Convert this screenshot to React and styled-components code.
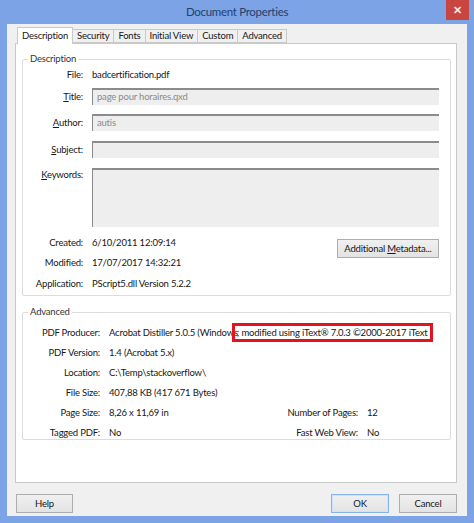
import React from 'react';
import styled, { createGlobalStyle } from 'styled-components';

const GlobalStyle = createGlobalStyle`
  html, body { margin: 0; padding: 0; }
  body {
    width: 474px;
    height: 523px;
    overflow: hidden;
    font-family: Lato, "Open Sans", sans-serif;
    font-size: 9.5px;
    letter-spacing: -0.2px;
    color: #161616;
  }
`;

const Window = styled.div`
  width: 474px;
  height: 523px;
  background: #7ba3e6;
  display: flex;
  flex-direction: column;
  box-sizing: border-box;
`;

const TitleBar = styled.div`
  height: 24px;
  display: grid;
  grid-template-columns: 1fr auto 1fr;
  align-items: start;
`;

const Title = styled.div`
  grid-column: 2;
  font-size: 11.5px;
  letter-spacing: -0.3px;
  line-height: 24px;
  color: #24406e;
`;

const CloseButton = styled.div`
  grid-column: 3;
  justify-self: end;
  margin-right: 5px;
  width: 23px;
  height: 20px;
  background: #c9453f;
  color: #fbe3e1;
  font-size: 11px;
  font-weight: bold;
  line-height: 19px;
  text-align: center;
`;

const Body = styled.div`
  flex: 1;
  margin: 0 7px 7px;
  background: #f0f0f0;
  padding: 3px 10px 0 8px;
  display: flex;
  flex-direction: column;
`;

const TabRow = styled.div`
  display: flex;
  align-items: flex-end;
  padding-left: 2px;
  height: 16px;
`;

const Tab = styled.div`
  box-sizing: border-box;
  height: ${p => (p.$active ? '17px' : '14px')};
  padding: 0 4px;
  margin-bottom: ${p => (p.$active ? '-1px' : '0')};
  background: ${p => (p.$active ? '#ffffff' : '#f0f0f0')};
  border: 1px solid #c9c9c9;
  border-bottom: ${p => (p.$active ? 'none' : '1px solid #c9c9c9')};
  border-left: ${p => (p.$first || p.$active ? '1px solid #c9c9c9' : 'none')};
  line-height: ${p => (p.$active ? '15px' : '12px')};
  white-space: nowrap;
  position: relative;
  z-index: ${p => (p.$active ? 1 : 0)};
`;

const Panel = styled.div`
  height: 440px;
  box-sizing: border-box;
  background: #ffffff;
  border: 1px solid #c9c9c9;
  padding: 9px 5px 0 6px;
  display: flex;
  flex-direction: column;
`;

const Group = styled.fieldset`
  margin: 0;
  margin-top: ${p => p.$top || 0}px;
  height: ${p => p.$height}px;
  box-sizing: border-box;
  border: 1px solid #dcdcdc;
  border-radius: 2px;
  padding: 0 11px 0 0;
  display: flex;
  flex-direction: column;
  min-width: 0;
`;

const Legend = styled.legend`
  padding: 0 2px;
  margin-left: 5px;
  line-height: 12px;
  color: #333;
`;

const Row = styled.div`
  display: grid;
  grid-template-columns: ${p => p.$label}px 1fr;
  column-gap: 9px;
  align-items: ${p => (p.$top ? 'start' : 'center')};
  height: ${p => p.$h}px;
  margin-top: ${p => p.$mt || 0}px;
`;

const Label = styled.div`
  text-align: right;
  white-space: nowrap;
  padding-top: ${p => p.$pt || 0}px;
`;

const Value = styled.div`
  white-space: nowrap;
`;

const Field = styled.div`
  box-sizing: border-box;
  height: ${p => p.$h || 17}px;
  background: #eeeeee;
  border-top: 2px solid #8b8b8b;
  border-left: 1px solid #8b8b8b;
  color: #8a8a8a;
  padding: 0 4px;
  line-height: 14px;
`;

const DatesBlock = styled.div`
  display: flex;
  align-items: flex-start;
  margin-top: 8px;
`;

const DatesColumn = styled.div`
  flex: 1;
  display: flex;
  flex-direction: column;
`;

const DialogButton = styled.button`
  box-sizing: border-box;
  width: ${p => p.$w || 58}px;
  height: 19px;
  padding: 0;
  font: inherit;
  letter-spacing: inherit;
  white-space: nowrap;
  color: #161616;
  background: linear-gradient(#f0f0f0, #e3e3e3);
  border: 1px solid ${p => (p.$default ? '#86b4ea' : '#adadad')};
  box-shadow: ${p => (p.$default ? 'inset 0 0 0 1px #cfe3fa' : 'none')};
`;

const MetaButton = styled(DialogButton)`
  margin-top: 4px;
`;

const AdvGrid = styled.div`
  display: grid;
  grid-template-columns: 77px 151px 89px auto;
  column-gap: 9px;
  grid-auto-rows: 20px;
  align-items: center;
  margin-top: 4px;
`;

const Wide = styled.div`
  grid-column: 2 / -1;
  white-space: nowrap;
`;

const Highlight = styled.span`
  outline: 3px solid #e3141f;
  outline-offset: 0px;
  margin-left: -3px;
  padding: 1px 3px 1px 2px;
`;

const Footer = styled.div`
  display: flex;
  align-items: center;
  margin-top: 11px;
  padding: 0 0 0 1px;
  gap: 10px;
`;

const Spacer = styled.div`
  flex: 1;
`;

export default function App() {
  const tabs = ['Description', 'Security', 'Fonts', 'Initial View', 'Custom', 'Advanced'];
  return (
    <>
      <GlobalStyle />
      <Window>
        <TitleBar>
          <Title>Document Properties</Title>
          <CloseButton>✕</CloseButton>
        </TitleBar>
        <Body>
          <TabRow>
            {tabs.map((t, i) => (
              <Tab key={t} $active={i === 0} $first={i === 0}>{t}</Tab>
            ))}
          </TabRow>
          <Panel>
            <Group $height={243}>
              <Legend>Description</Legend>
              <Row $label={60} $h={17} $mt={1}>
                <Label>File:</Label>
                <Value>badcertification.pdf</Value>
              </Row>
              <Row $label={60} $h={17} $mt={5}>
                <Label><u>T</u>itle:</Label>
                <Field>page pour horaires.qxd</Field>
              </Row>
              <Row $label={60} $h={17} $mt={9}>
                <Label><u>A</u>uthor:</Label>
                <Field>autis</Field>
              </Row>
              <Row $label={60} $h={17} $mt={10}>
                <Label><u>S</u>ubject:</Label>
                <Field />
              </Row>
              <Row $label={60} $h={59} $mt={10} $top>
                <Label $pt={1}><u>K</u>eywords:</Label>
                <Field $h={59} />
              </Row>
              <DatesBlock>
                <DatesColumn>
                  <Row $label={60} $h={14}>
                    <Label>Created:</Label>
                    <Value>6/10/2011 12:09:14</Value>
                  </Row>
                  <Row $label={60} $h={14} $mt={6}>
                    <Label>Modified:</Label>
                    <Value>17/07/2017 14:32:21</Value>
                  </Row>
                </DatesColumn>
                <MetaButton $w={102}>Additional <u>M</u>etadata...</MetaButton>
              </DatesBlock>
              <Row $label={60} $h={14} $mt={7}>
                <Label>Application:</Label>
                <Value>PScript5.dll Version 5.2.2</Value>
              </Row>
            </Group>
            <Group $height={134} $top={10}>
              <Legend>Advanced</Legend>
              <AdvGrid>
                <Label>PDF Producer:</Label>
                <Wide>
                  Acrobat Distiller 5.0.5 (Windows
                  <Highlight>; modified using iText® 7.0.3 ©2000-2017 iText</Highlight>
                </Wide>
                <Label>PDF Version:</Label>
                <Wide>1.4 (Acrobat 5.x)</Wide>
                <Label>Location:</Label>
                <Wide>C:\Temp\stackoverflow\</Wide>
                <Label>File Size:</Label>
                <Wide>407,88 KB (417 671 Bytes)</Wide>
                <Label>Page Size:</Label>
                <Value>8,26 x 11,69 in</Value>
                <Label>Number of Pages:</Label>
                <Value>12</Value>
                <Label>Tagged PDF:</Label>
                <Value>No</Value>
                <Label>Fast Web View:</Label>
                <Value>No</Value>
              </AdvGrid>
            </Group>
          </Panel>
          <Footer>
            <DialogButton $w={57}>Help</DialogButton>
            <Spacer />
            <DialogButton $default>OK</DialogButton>
            <DialogButton>Cancel</DialogButton>
          </Footer>
        </Body>
      </Window>
    </>
  );
}
